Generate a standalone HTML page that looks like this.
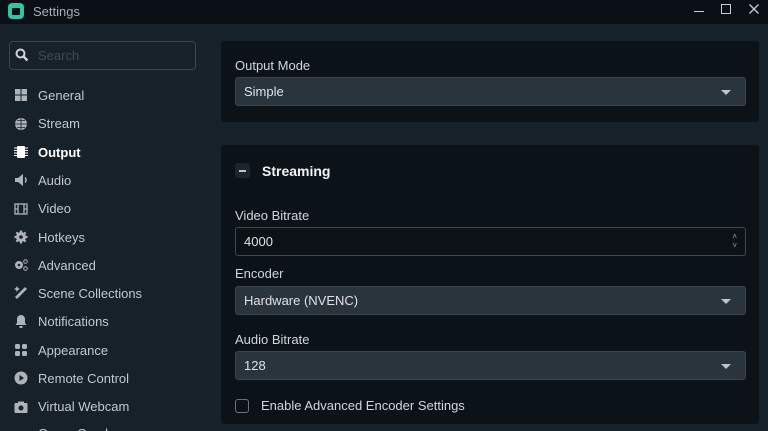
<!DOCTYPE html>
<html style="width:768px;height:431px;overflow:hidden"><head><style>
*{margin:0;padding:0;box-sizing:border-box}
body{width:768px;height:431px;overflow:hidden;background:#17212a;font-family:"Liberation Sans",sans-serif;position:relative;color:#c9ced3}
.a{position:absolute}
.title{left:0;top:0;width:768px;height:24px;background:#0a1015}
.nav{left:38px;font-size:13px;color:#c3c8cd}
.ic{left:14px;width:14px;height:14px}
.panel{background:#0c1318;border-radius:3px}
.lbl{left:235px;font-size:13px;color:#d2d6da}
.sel{left:235px;width:511px;height:29px;background:#2a343d;border:1px solid #3a444d;border-radius:3px;font-size:13px;color:#dfe2e5;padding:6px 0 0 8px}
.inp{background:#0b1115;border:1px solid #3e4850}
.car{position:absolute;right:14px;top:12px;width:0;height:0;border-left:5px solid transparent;border-right:5px solid transparent;border-top:5px solid #c0c4c8}
</style></head><body>
<div class="a title"></div>
<div class="a" style="left:8px;top:3px;width:16px;height:16px;background:#31c3a2;border-radius:4px"></div>
<div class="a" style="left:12px;top:8px;width:8px;height:7px;background:#0a1015;border-radius:1px"></div>
<div class="a" style="left:33px;top:4px;font-size:13px;color:#a8adb2">Settings</div>
<div class="a" style="left:694px;top:11px;width:10px;height:1px;background:#c8ccd0"></div>
<div class="a" style="left:721px;top:4px;width:10px;height:10px;border:1px solid #c8ccd0"></div>
<svg class="a" style="left:749px;top:4px" width="10" height="10" viewBox="0 0 10 10"><path d="M0.5 0.5l9 9M9.5 0.5l-9 9" stroke="#c8ccd0" stroke-width="1.3"/></svg>

<div class="a" style="left:9px;top:41px;width:187px;height:29px;border:1px solid #3a454f;border-radius:4px"></div>
<svg class="a" style="left:15px;top:48px" width="14" height="14" viewBox="0 0 14 14"><circle cx="5.5" cy="5.5" r="4" fill="none" stroke="#d0d4d8" stroke-width="2"/><path d="M8.5 8.5L12.5 12.5" stroke="#d0d4d8" stroke-width="2.4"/></svg>
<div class="a" style="left:38px;top:48px;font-size:13px;color:#414b54">Search</div>

<svg class="a ic" style="top:88px" viewBox="0 0 14 14" fill="#aeb3b8"><rect x="1" y="1" width="5.5" height="5.5"/><rect x="7.5" y="1" width="5.5" height="5.5"/><rect x="1" y="7.5" width="5.5" height="5.5"/><rect x="7.5" y="7.5" width="5.5" height="5.5"/></svg>
<div class="a nav" style="top:88px">General</div>
<svg class="a ic" style="top:117px" viewBox="0 0 14 14"><circle cx="7" cy="7" r="6" fill="#aeb3b8"/><path d="M1 7h12M7 1v12M3 3.5h8M3 10.5h8" stroke="#17212a" stroke-width="0.8"/></svg>
<div class="a nav" style="top:116px">Stream</div>
<svg class="a ic" style="top:145px" viewBox="0 0 14 14" fill="#fff"><rect x="3" y="1" width="8" height="12" rx="1"/><path d="M0 3h3M0 5.5h3M0 8h3M0 10.5h3M11 3h3M11 5.5h3M11 8h3M11 10.5h3" stroke="#fff" stroke-width="1"/></svg>
<div class="a nav" style="top:145px;color:#fff;font-weight:bold">Output</div>
<svg class="a ic" style="top:173px" viewBox="0 0 14 14" fill="#aeb3b8"><path d="M1 5h3l5-4v12l-5-4H1z"/><path d="M11 4.5a3.5 3.5 0 010 5" stroke="#aeb3b8" stroke-width="1.5" fill="none"/></svg>
<div class="a nav" style="top:173px">Audio</div>
<svg class="a ic" style="top:202px" viewBox="0 0 14 14" fill="none" stroke="#aeb3b8" stroke-width="1.3"><rect x="1" y="2" width="12" height="10"/><path d="M4 2v10M10 2v10M1 7h3M10 7h3"/></svg>
<div class="a nav" style="top:201px">Video</div>
<svg class="a ic" style="top:230px" viewBox="0 0 14 14"><circle cx="7" cy="7" r="5" fill="#aeb3b8"/><path d="M7 0.5v13M0.5 7h13M2.4 2.4l9.2 9.2M11.6 2.4l-9.2 9.2" stroke="#aeb3b8" stroke-width="2.2"/><circle cx="7" cy="7" r="1.8" fill="#17212a"/></svg>
<div class="a nav" style="top:230px">Hotkeys</div>
<svg class="a ic" style="top:258px" viewBox="0 0 14 14"><circle cx="5" cy="7" r="4" fill="#aeb3b8"/><circle cx="5" cy="7" r="1.3" fill="#17212a"/><circle cx="11.5" cy="3.5" r="1.8" fill="none" stroke="#aeb3b8"/><circle cx="11.5" cy="10.5" r="1.8" fill="none" stroke="#aeb3b8"/></svg>
<div class="a nav" style="top:258px">Advanced</div>
<svg class="a ic" style="top:286px" viewBox="0 0 14 14" fill="#aeb3b8"><path d="M3 13L13 3l-2-2L1 11z"/><path d="M2 2l1-2 1 2 2 1-2 1-1 2-1-2-2-1z"/></svg>
<div class="a nav" style="top:286px">Scene Collections</div>
<svg class="a ic" style="top:314px" viewBox="0 0 14 14" fill="#aeb3b8"><path d="M7 1a4 4 0 014 4v4l1.5 2h-11L3 9V5a4 4 0 014-4z"/><rect x="5.5" y="12" width="3" height="2"/></svg>
<div class="a nav" style="top:314px">Notifications</div>
<svg class="a ic" style="top:343px" viewBox="0 0 14 14" fill="#aeb3b8"><rect x="1" y="1" width="5" height="5" rx="1.5"/><rect x="8" y="1" width="5" height="5" rx="1.5"/><rect x="1" y="8" width="5" height="5" rx="1.5"/><rect x="8" y="8" width="5" height="5" rx="1.5"/></svg>
<div class="a nav" style="top:343px">Appearance</div>
<svg class="a ic" style="top:371px" viewBox="0 0 14 14"><circle cx="7" cy="7" r="6.5" fill="#aeb3b8"/><path d="M5.5 4v6l4.5-3z" fill="#17212a"/></svg>
<div class="a nav" style="top:371px">Remote Control</div>
<svg class="a ic" style="top:400px" viewBox="0 0 14 14"><rect x="0.5" y="3" width="13" height="10" rx="1" fill="#aeb3b8"/><rect x="4" y="1.5" width="6" height="2" fill="#aeb3b8"/><circle cx="7" cy="8" r="2.5" fill="#17212a"/></svg>
<div class="a nav" style="top:399px">Virtual Webcam</div>
<div class="a nav" style="top:426px;height:5px;overflow:hidden">Game Overlay</div>

<div class="a panel" style="left:221px;top:41px;width:538px;height:81px"></div>
<div class="a lbl" style="top:58px">Output Mode</div>
<div class="a sel" style="top:77px">Simple<div class="car"></div></div>

<div class="a panel" style="left:221px;top:145px;width:538px;height:279px"></div>
<div class="a" style="left:235px;top:163px;width:15px;height:15px;background:#1c252d;border-radius:3px"></div>
<div class="a" style="left:239px;top:170px;width:7px;height:1.5px;background:#c0c4c8"></div>
<div class="a" style="left:262px;top:163px;font-size:14px;font-weight:bold;color:#f2f4f5">Streaming</div>
<div class="a lbl" style="top:208px">Video Bitrate</div>
<div class="a sel inp" style="top:227px">4000<div class="a" style="right:8px;top:4px;font-size:8px;line-height:9px;color:#9aa0a5">˄<br>˅</div></div>
<div class="a lbl" style="top:266px">Encoder</div>
<div class="a sel" style="top:286px">Hardware (NVENC)<div class="car"></div></div>
<div class="a lbl" style="top:332px">Audio Bitrate</div>
<div class="a sel" style="top:351px">128<div class="car"></div></div>
<div class="a" style="left:235px;top:399px;width:14px;height:14px;border:1px solid #6a737b;border-radius:3px"></div>
<div class="a lbl" style="left:261px;top:398px">Enable Advanced Encoder Settings</div>
</body></html>
